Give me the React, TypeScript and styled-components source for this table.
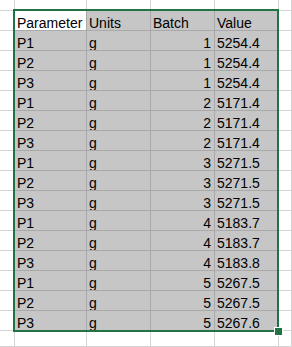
import { createGlobalStyle } from 'styled-components';
import styled from 'styled-components';

const Global = createGlobalStyle`
  html, body {
    margin: 0;
    background: #fff;
  }
`;

const Wrap = styled.div`
  position: relative;
  width: 292px;
  height: 347px;
  overflow: hidden;
`;

const Sheet = styled.div`
  display: grid;
  grid-template-columns: 15px 72px 64px 64px 64px 1fr;
  grid-template-rows: 11px repeat(16, 20px) 1fr;
  width: 100%;
  height: 100%;
  font-family: 'Liberation Sans', Arial, sans-serif;
  font-size: 14px;
  color: #000;
`;

const Cell = styled.div<{ $sel?: boolean; $active?: boolean; $num?: boolean }>`
  box-sizing: border-box;
  border-right: 1px solid ${(p) => (p.$sel ? '#a9a9a9' : '#d4d4d4')};
  border-bottom: 1px solid ${(p) => (p.$sel ? '#a9a9a9' : '#d4d4d4')};
  background: ${(p) => (p.$active ? '#fff' : p.$sel ? '#c6c6c6' : '#fff')};
  padding: 3px ${(p) => (p.$num ? '3px' : '0')} 0 ${(p) => (p.$num ? '0' : '2px')};
  line-height: 18px;
  text-align: ${(p) => (p.$num ? 'right' : 'left')};
  white-space: nowrap;
  overflow: hidden;
`;

const Selection = styled.div`
  position: absolute;
  left: 13px;
  top: 9px;
  width: 266px;
  height: 323px;
  box-sizing: border-box;
  border: 2px solid #217346;
  pointer-events: none;
`;

const Handle = styled.div`
  position: absolute;
  left: 274px;
  top: 327px;
  width: 9px;
  height: 9px;
  box-sizing: border-box;
  background: #217346;
  border: 1px solid #fff;
`;

const rows: [string, string, number, string][] = [
  ['P1', 'g', 1, '5254.4'],
  ['P2', 'g', 1, '5254.4'],
  ['P3', 'g', 1, '5254.4'],
  ['P1', 'g', 2, '5171.4'],
  ['P2', 'g', 2, '5171.4'],
  ['P3', 'g', 2, '5171.4'],
  ['P1', 'g', 3, '5271.5'],
  ['P2', 'g', 3, '5271.5'],
  ['P3', 'g', 3, '5271.5'],
  ['P1', 'g', 4, '5183.7'],
  ['P2', 'g', 4, '5183.7'],
  ['P3', 'g', 4, '5183.8'],
  ['P1', 'g', 5, '5267.5'],
  ['P2', 'g', 5, '5267.5'],
  ['P3', 'g', 5, '5267.6'],
];

const blankRow = (key: string) =>
  Array.from({ length: 6 }, (_, i) => <Cell key={`${key}-${i}`} />);

export default function App() {
  return (
    <Wrap>
      <Global />
      <Sheet>
        {blankRow('top')}
        <Cell />
        <Cell $sel $active>Parameter</Cell>
        <Cell $sel>Units</Cell>
        <Cell $sel>Batch</Cell>
        <Cell $sel>Value</Cell>
        <Cell />
        {rows.map(([p, u, b, v], i) => [
          <Cell key={`a${i}`} />,
          <Cell key={`p${i}`} $sel>{p}</Cell>,
          <Cell key={`u${i}`} $sel>{u}</Cell>,
          <Cell key={`b${i}`} $sel $num>{b}</Cell>,
          <Cell key={`v${i}`} $sel>{v}</Cell>,
          <Cell key={`z${i}`} />,
        ])}
        {blankRow('bottom')}
      </Sheet>
      <Selection />
      <Handle />
    </Wrap>
  );
}
